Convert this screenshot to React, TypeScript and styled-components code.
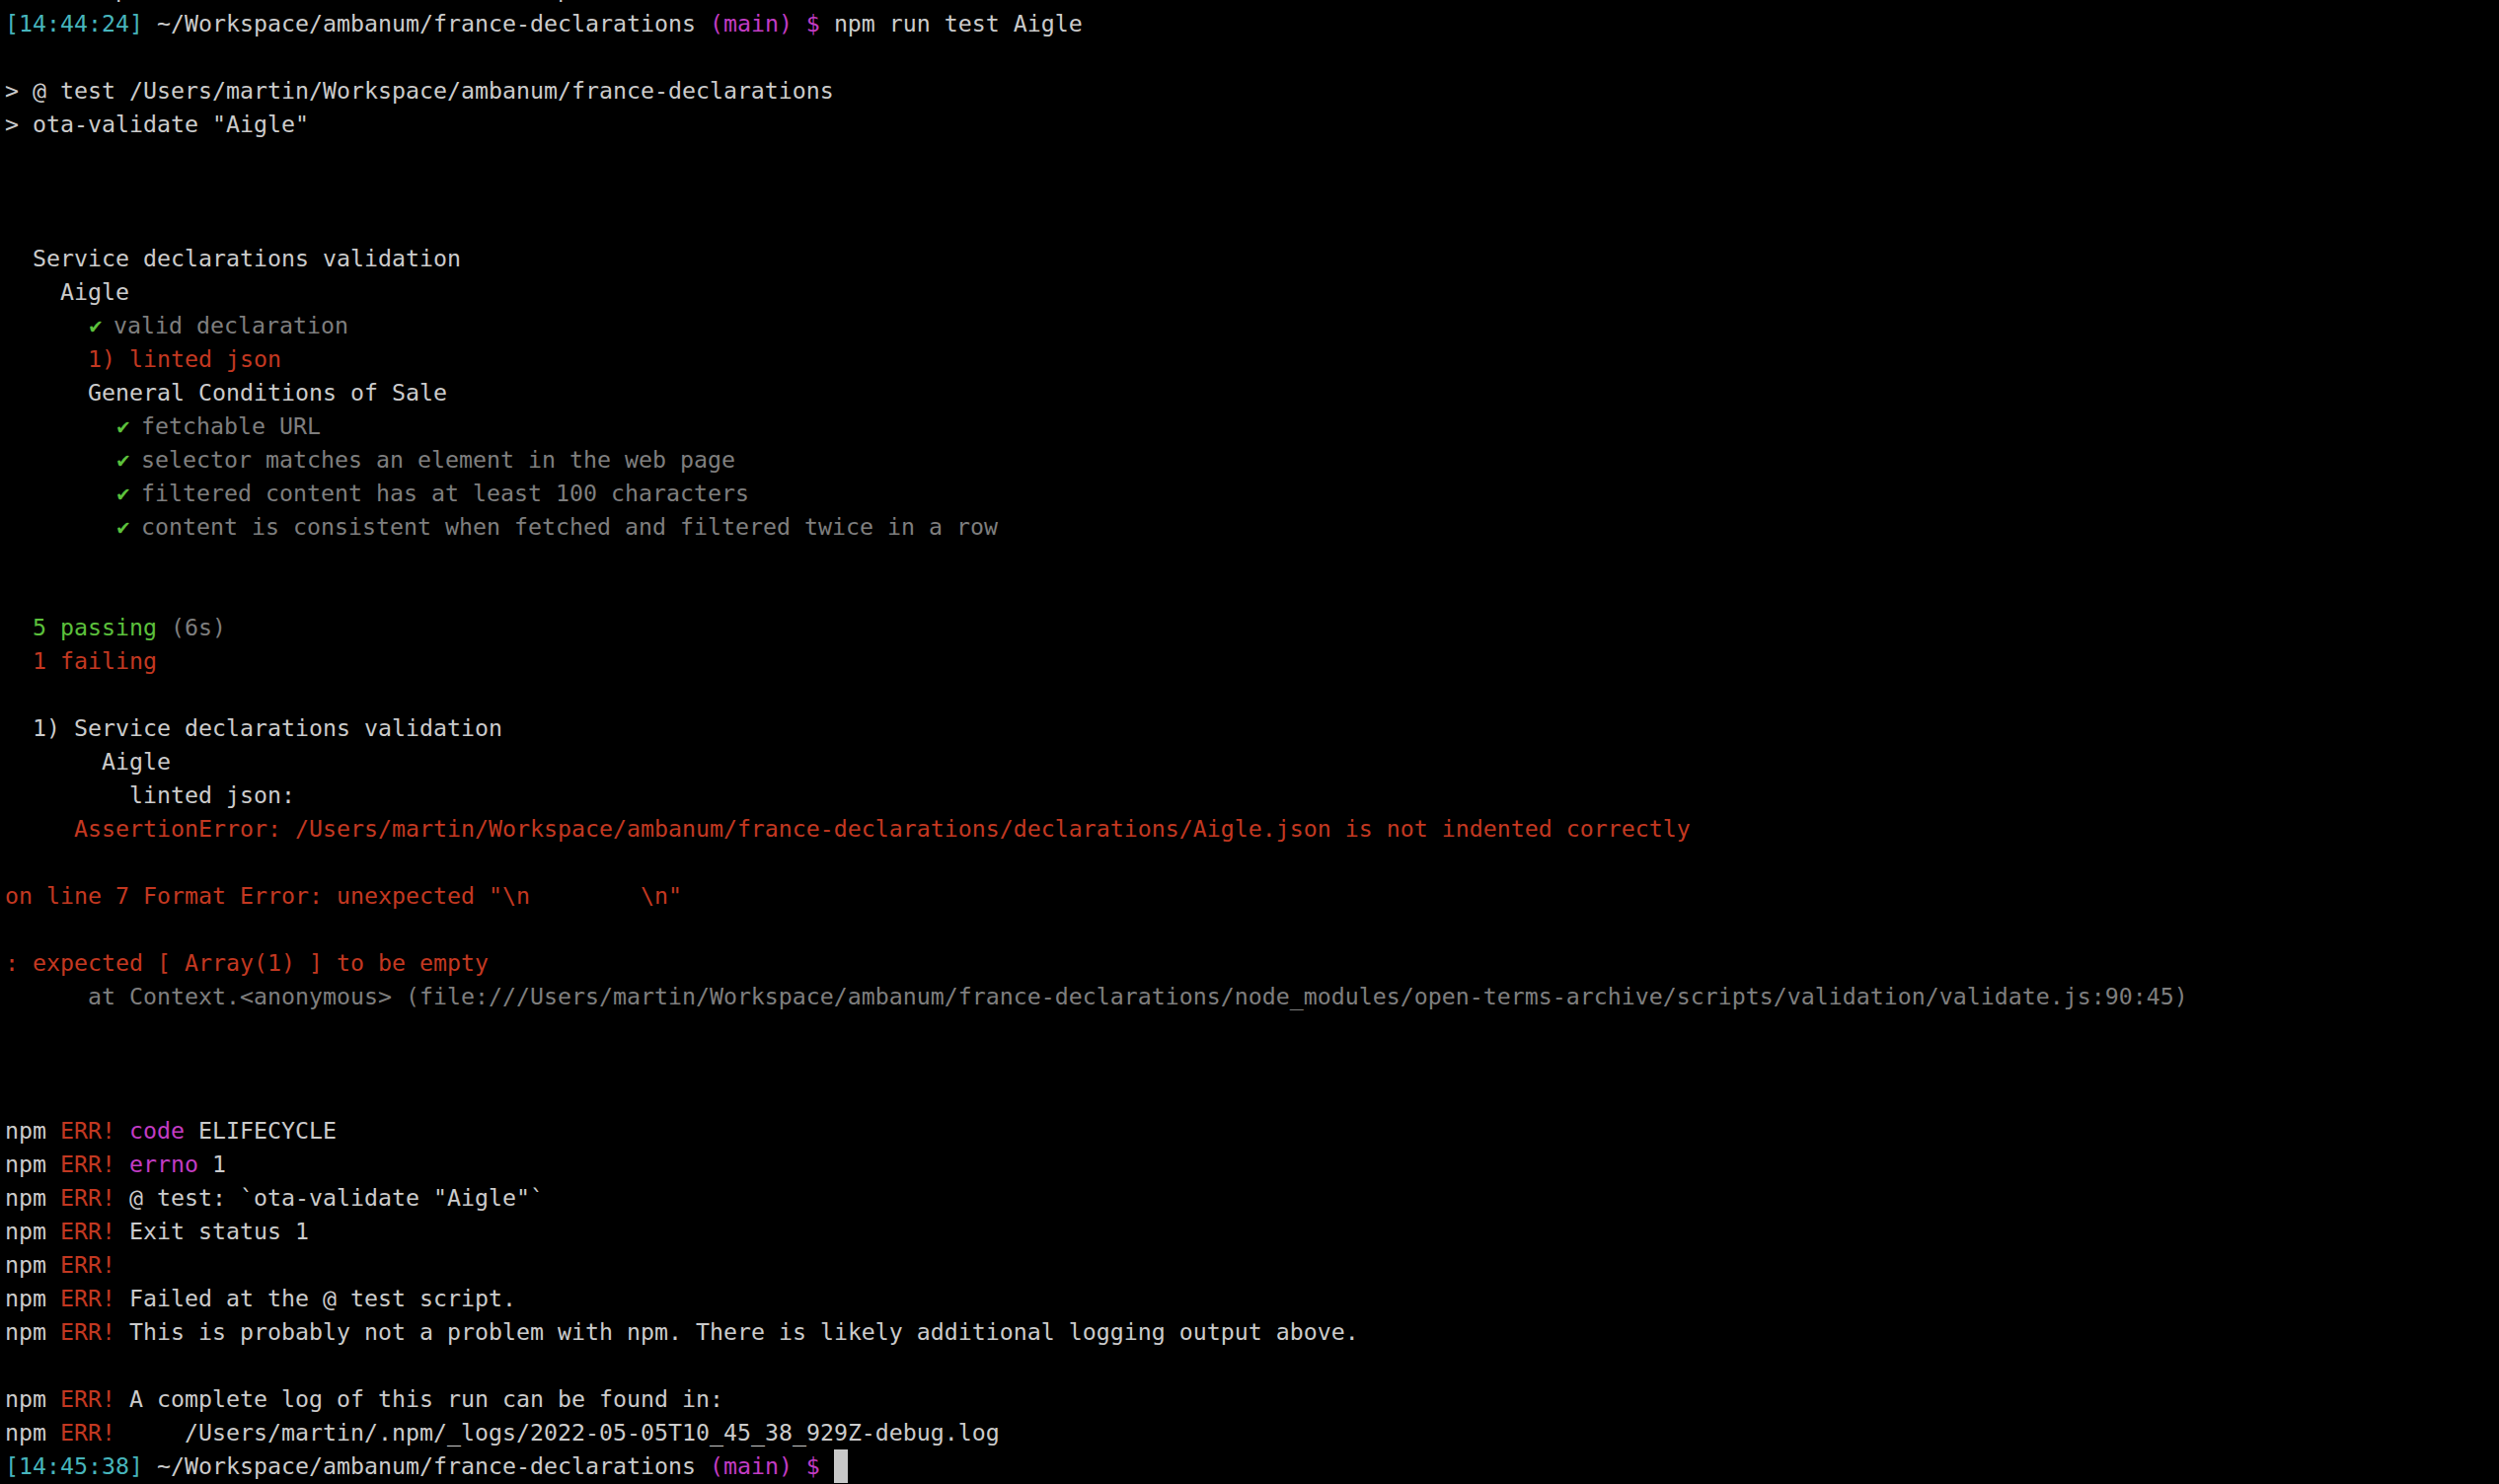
import React from "react";
import styled, { createGlobalStyle } from "styled-components";

const Global = createGlobalStyle`
  html, body {
    margin: 0;
    padding: 0;
    background: #000000;
  }
  #root {
    min-height: 100vh;
    background: #000000;
  }
`;

type Tone = "fg" | "dim" | "green" | "red" | "magenta" | "cyan";

const toneColor: Record<Tone, string> = {
  fg: "#cbcbcb",
  dim: "#7e7e7e",
  green: "#5cc13c",
  red: "#c33821",
  magenta: "#c23cc4",
  cyan: "#47b5bc",
};

const Screen = styled.main`
  height: 1504px;
  overflow: hidden;
  box-sizing: border-box;
  padding: 7px 0 0 5px;
  background: #000000;
  font-family: "DejaVu Sans Mono", "Liberation Mono", monospace;
  font-size: 23.25px;
  line-height: 34px;
  color: ${toneColor.fg};
`;

const Line = styled.div<{ $scrollback?: boolean }>`
  height: 34px;
  white-space: pre;
  margin-top: ${(p) => (p.$scrollback ? "-35px" : "0")};
  margin-bottom: ${(p) => (p.$scrollback ? "1px" : "0")};
`;

const Seg = styled.span<{ $tone: Tone }>`
  color: ${(p) => toneColor[p.$tone]};
`;

const Check = styled.span`
  display: inline-block;
  width: 1ch;
  color: ${toneColor.green};
  font-family: "DejaVu Sans", "DejaVu Sans Mono", sans-serif;
  font-size: 19px;
  text-align: left;
`;

const Cursor = styled.span`
  display: inline-block;
  width: 1ch;
  height: 34px;
  vertical-align: top;
  background: #c8c8c8;
`;

type Part = [Tone, string] | ["check"] | ["cursor"];

const prompt = (time: string): Part[] => [
  ["cyan", `[${time}]`],
  ["fg", " ~/Workspace/ambanum/france-declarations "],
  ["magenta", "(main) $"],
  ["fg", " "],
];

const npmErr = (rest: Part[]): Part[] => [["fg", "npm "], ["red", "ERR!"], ...rest];

const rows: Part[][] = [
  [...prompt("14:44:24"), ["fg", "npm run test Aigle"]],
  [],
  [["fg", "> @ test /Users/martin/Workspace/ambanum/france-declarations"]],
  [["fg", '> ota-validate "Aigle"']],
  [],
  [],
  [],
  [["fg", "  Service declarations validation"]],
  [["fg", "    Aigle"]],
  [["fg", "      "], ["check"], ["dim", " valid declaration"]],
  [["red", "      1) linted json"]],
  [["fg", "      General Conditions of Sale"]],
  [["fg", "        "], ["check"], ["dim", " fetchable URL"]],
  [["fg", "        "], ["check"], ["dim", " selector matches an element in the web page"]],
  [["fg", "        "], ["check"], ["dim", " filtered content has at least 100 characters"]],
  [["fg", "        "], ["check"], ["dim", " content is consistent when fetched and filtered twice in a row"]],
  [],
  [],
  [["fg", "  "], ["green", "5 passing"], ["dim", " (6s)"]],
  [["red", "  1 failing"]],
  [],
  [["fg", "  1) Service declarations validation"]],
  [["fg", "       Aigle"]],
  [["fg", "         linted json:"]],
  [
    [
      "red",
      "     AssertionError: /Users/martin/Workspace/ambanum/france-declarations/declarations/Aigle.json is not indented correctly",
    ],
  ],
  [],
  [["red", 'on line 7 Format Error: unexpected "\\n        \\n"']],
  [],
  [["red", ": expected [ Array(1) ] to be empty"]],
  [
    [
      "dim",
      "      at Context.<anonymous> (file:///Users/martin/Workspace/ambanum/france-declarations/node_modules/open-terms-archive/scripts/validation/validate.js:90:45)",
    ],
  ],
  [],
  [],
  [],
  npmErr([["magenta", " code"], ["fg", " ELIFECYCLE"]]),
  npmErr([["magenta", " errno"], ["fg", " 1"]]),
  npmErr([["fg", ' @ test: `ota-validate "Aigle"`']]),
  npmErr([["fg", " Exit status 1"]]),
  npmErr([]),
  npmErr([["fg", " Failed at the @ test script."]]),
  npmErr([["fg", " This is probably not a problem with npm. There is likely additional logging output above."]]),
  [],
  npmErr([["fg", " A complete log of this run can be found in:"]]),
  npmErr([["fg", "     /Users/martin/.npm/_logs/2022-05-05T10_45_38_929Z-debug.log"]]),
  [...prompt("14:45:38"), ["cursor"]],
];

const renderPart = (part: Part, i: number) => {
  if (part[0] === "check") return <Check key={i}>✔</Check>;
  if (part[0] === "cursor") return <Cursor key={i} />;
  const [tone, text] = part as [Tone, string];
  return (
    <Seg key={i} $tone={tone}>
      {text}
    </Seg>
  );
};

export default function App() {
  return (
    <>
      <Global />
      <Screen>
        <Line $scrollback>
          <Seg $tone="fg">{"        p                        ,      p"}</Seg>
        </Line>
        {rows.map((parts, r) => (
          <Line key={r}>{parts.length ? parts.map(renderPart) : " "}</Line>
        ))}
      </Screen>
    </>
  );
}
